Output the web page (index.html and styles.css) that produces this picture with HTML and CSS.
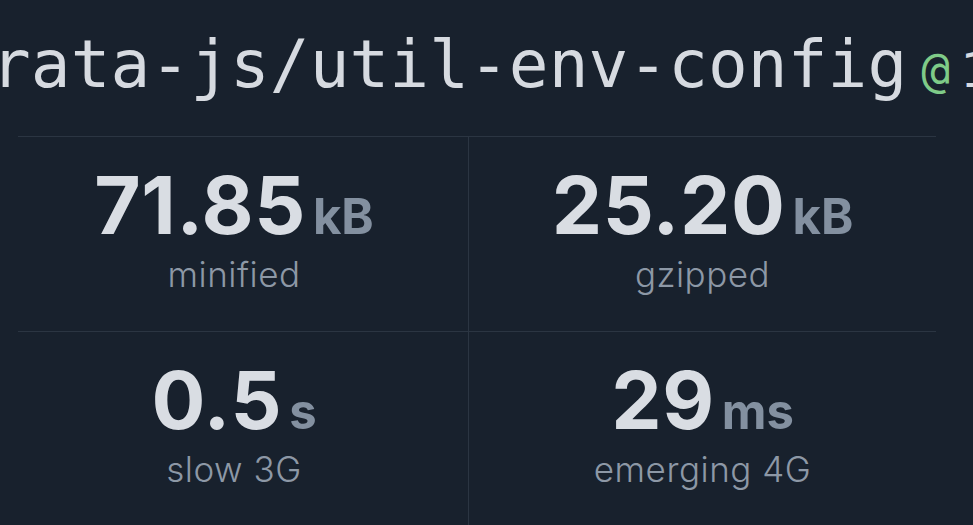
FILE: index.html
```html
<!DOCTYPE html>
<html lang="en">
<head>
<meta charset="utf-8">
<title>util-env-config</title>
<link rel="stylesheet" href="styles.css">
</head>
<body>
<div class="page">
  <h1 class="title"><span class="name">rata-js/util-env-config</span><span class="at">@</span><span class="version">1.0.0</span></h1>
  <div class="stats">
    <div class="row">
      <div class="cell first">
        <div class="value">71.85<span class="unit">kB</span></div>
        <div class="label">minified</div>
      </div>
      <div class="cell second">
        <div class="value">25.20<span class="unit">kB</span></div>
        <div class="label">gzipped</div>
      </div>
    </div>
    <div class="row">
      <div class="cell first">
        <div class="value">0.5<span class="unit">s</span></div>
        <div class="label">slow 3G</div>
      </div>
      <div class="cell second">
        <div class="value">29<span class="unit">ms</span></div>
        <div class="label">emerging 4G</div>
      </div>
    </div>
  </div>
</div>
</body>
</html>
```
FILE: styles.css
```css
html, body {
  margin: 0;
  padding: 0;
  background: #18212d;
  height: 100%;
  overflow: hidden;
}
.page {
  width: 973px;
  height: 525px;
  overflow: hidden;
}
.title {
  margin: 0;
  padding-top: 32px;
  height: 136px;
  box-sizing: border-box;
  font-family: "DejaVu Sans Mono", "Liberation Mono", monospace;
  font-weight: 400;
  font-size: 66px;
  line-height: 1;
  color: #d6dae0;
  white-space: nowrap;
  overflow: hidden;
  letter-spacing: 0.1px;
  text-indent: -9px;
}
.at {
  color: #7fcb88;
  font-size: 48px;
  margin-left: 14px;
  letter-spacing: 0;
}
.version {
  font-size: 48px;
  margin-left: 10px;
}
.stats {
  width: 936px;
}
.row {
  display: flex;
}
.cell {
  box-sizing: border-box;
  border-top: 1px solid #2b3542;
  height: 195px;
  padding-top: 28px;
  display: flex;
  flex-direction: column;
  align-items: center;
}
.first {
  margin-left: 18px;
  width: 450px;
  padding-right: 18px;
}
.second {
  width: 468px;
  border-left: 1px solid #2b3542;
}
.value {
  font-family: Inter, "Noto Sans", sans-serif;
  font-weight: 700;
  font-size: 80px;
  line-height: 1;
  color: #d9dde3;
  letter-spacing: 0.6px;
}
.unit {
  font-size: 49px;
  color: #8390a0;
  margin-left: 7px;
  letter-spacing: 0;
}
.label {
  margin-top: 8px;
  font-family: Inter, "Noto Sans", sans-serif;
  font-weight: 300;
  font-size: 35px;
  line-height: 1.2;
  color: #8d98a6;
  letter-spacing: 0.5px;
}
```
